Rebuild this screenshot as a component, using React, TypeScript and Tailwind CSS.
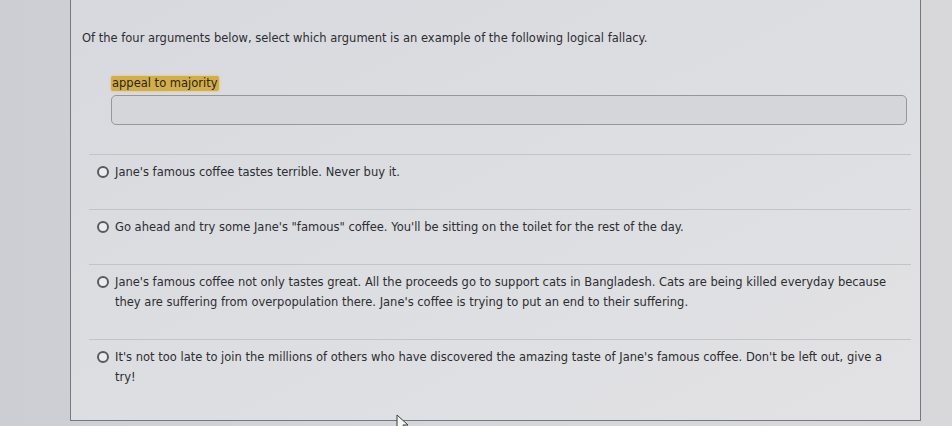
import React from "react";

const options = [
  "Jane's famous coffee tastes terrible. Never buy it.",
  "Go ahead and try some Jane's \"famous\" coffee. You'll be sitting on the toilet for the rest of the day.",
  "Jane's famous coffee not only tastes great. All the proceeds go to support cats in Bangladesh. Cats are being killed everyday because they are suffering from overpopulation there. Jane's coffee is trying to put an end to their suffering.",
  "It's not too late to join the millions of others who have discovered the amazing taste of Jane's famous coffee. Don't be left out, give a try!",
];

function Radio() {
  return (
    <span className="mt-[4px] block h-[12px] w-[12px] shrink-0 rounded-full border-[2px] border-[#595a5e] bg-[#ececee]" />
  );
}

export default function App() {
  return (
    <div
      className="relative h-[426px] w-[952px] overflow-hidden bg-linear-to-r from-[#cdced4] via-[#d6d7dc] to-[#d8d8db] text-[#2c2d31]"
      style={{ fontFamily: '"DejaVu Sans", Verdana, sans-serif' }}
    >
      <div className="ml-[70px] h-[421px] w-[851px] border-x border-b border-[#77787d] bg-linear-to-br from-[#d8d9de] via-[#dddee2] to-[#e2e2e4] pl-[11px] pt-[31px]">
        <p className="text-[11.5px] leading-[14px]">
          Of the four arguments below, select which argument is an example of the following logical fallacy.
        </p>

        <div className="ml-[29px] mt-[31px]">
          <span className="block w-fit rounded-[2px] bg-[#d3ae48] px-[1px] text-[11.5px] leading-[15px] text-[#2a2616] shadow-[0_0_3px_#e0c070]">
            appeal to majority
          </span>
          <div className="mt-[4px] h-[30px] w-[796px] rounded-[5px] border border-[#96979b] bg-[#d5d6da]" />
        </div>

        <div className="ml-[7px] mt-[29px] w-[822px]">
          {options.map((text, i) => (
            <div
              key={i}
              className={`flex gap-[6px] border-t border-[#c3c4c8] pt-[7px] ${
                i === 3 ? "pb-[30px]" : "pb-[27px]"
              }`}
            >
              <div className="flex w-[20px] shrink-0 justify-end">
                <Radio />
              </div>
              <p className="w-[775px] text-[11.5px] leading-[20px]">{text}</p>
            </div>
          ))}
        </div>
      </div>

      <svg
        className="absolute left-[396px] top-[414px]"
        width="14"
        height="20"
        viewBox="0 0 14 20"
      >
        <path d="M1 1 L1 16 L5 12 L8 19 L10 18 L7 11 L12 11 Z" fill="#f4f4f4" stroke="#3a3a3a" strokeWidth="1" />
      </svg>
    </div>
  );
}
